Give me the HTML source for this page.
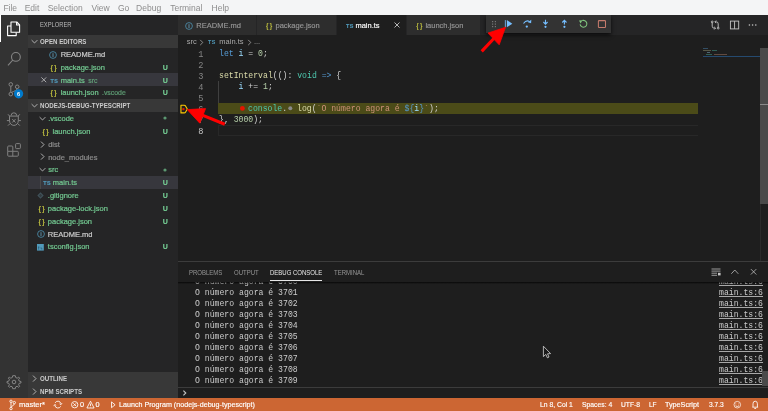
<!DOCTYPE html>
<html><head><meta charset="utf-8">
<style>
*{box-sizing:border-box}
html,body{margin:0;padding:0}
body{width:768px;height:411px;overflow:hidden;position:relative;background:#1e1e1e;font-family:"Liberation Sans",sans-serif;}
.a{position:absolute;white-space:pre}
.mono{font-family:"Liberation Mono",monospace}
#menubar{left:0;top:0;width:768px;height:15px;background:#f4f5f6;z-index:5}
#menubar span{position:absolute;top:0.9px;line-height:15px;font-size:8.5px;color:#8d8d8d}
#activity{left:0;top:15px;width:28px;height:383px;background:#333333}
#sidebar{left:28px;top:15px;width:149.5px;height:383px;background:#252526;overflow:hidden}
.row{position:absolute;left:0;width:149.5px;height:12.83px;line-height:12.83px;font-size:7.5px;color:#73c991;-webkit-text-stroke:0.2px currentColor}
.row span{position:absolute;top:1.1px}
.hdr{position:absolute;left:0;width:149.5px;height:12.83px;line-height:12.83px;background:#383838;color:#cccccc;font-weight:bold;font-size:7px}
.hdr span{transform:scaleX(0.88);transform-origin:0 50%;margin-top:0.6px}
.u{left:134.7px;color:#73c991;font-size:7px;font-weight:bold}
#tabs{left:177.5px;top:15px;width:590.5px;height:20px;background:#252526}
.tab{position:absolute;top:0;height:20px;line-height:20px;background:#2d2d2d;font-size:7.5px;color:#969696;-webkit-text-stroke:0.15px currentColor}
.tab span{position:absolute;top:0.6px}
#editor{left:177.5px;top:35px;width:590.5px;height:226.5px;background:#1e1e1e;overflow:hidden}
.ln{position:absolute;left:0;width:26px;text-align:right;font-size:8.6px;margin-top:1.2px;line-height:11px;color:#858585}
.cl{position:absolute;left:41.2px;font-size:8.8px;line-height:11px;color:#d4d4d4;white-space:pre;transform:scaleX(0.926);transform-origin:0 50%;margin-top:0.7px}
#panel{left:177.5px;top:261.3px;width:590.5px;height:136.7px;background:#1e1e1e;border-top:1px solid #3c3c3c;overflow:hidden}
.pl{position:absolute;left:17px;font-size:8.8px;line-height:11px;color:#cccccc;white-space:pre;transform:scaleX(0.926);transform-origin:0 50%}
.plink{position:absolute;left:541.5px;font-size:8.8px;line-height:11px;color:#cccccc;text-decoration:underline;text-decoration-thickness:0.7px;text-underline-offset:1px;text-decoration-color:#a8a8a8;white-space:pre;transform:scaleX(0.926);transform-origin:0 50%}
#status{left:0;top:398px;width:768px;height:13px;background:#cc6633}
#status span{position:absolute;top:0.2px;line-height:13px;font-size:7.2px;color:#ffffff;-webkit-text-stroke:0.15px currentColor}
</style></head>
<body><div id="root" style="position:absolute;left:0;top:0;width:768px;height:411px;will-change:transform">
<!-- MENUBAR -->
<div id="menubar" class="a">
<span style="left:3.4px">File</span>
<span style="left:24.7px">Edit</span>
<span style="left:47.7px">Selection</span>
<span style="left:91.4px">View</span>
<span style="left:117.9px">Go</span>
<span style="left:136.1px">Debug</span>
<span style="left:170.2px">Terminal</span>
<span style="left:211.6px">Help</span>
</div>

<!-- ACTIVITY BAR -->
<div id="activity" class="a">
<div style="position:absolute;left:0;top:0;width:1.2px;height:27px;background:#ffffff"></div>
<svg class="a" style="left:0;top:0" width="28" height="383" viewBox="0 15 28 383">
 <g fill="none" stroke="#ffffff" stroke-width="1.1" stroke-linejoin="round">
  <path d="M11 26 L7.6 26 L7.6 35.6 L16.2 35.6 L16.2 32.6"/>
  <path d="M11 22 L16.8 22 L19.6 24.8 L19.6 32.2 L11 32.2 Z"/>
  <path d="M16.6 22 L16.6 25 L19.6 25"/>
 </g>
 <g fill="none" stroke="#858585" stroke-width="1.1">
  <circle cx="15.9" cy="56.9" r="4.4"/>
  <path d="M12.8 60 L8 65.3"/>
 </g>
 <g fill="none" stroke="#858585" stroke-width="1">
  <circle cx="10.8" cy="84.4" r="1.8"/>
  <circle cx="10.8" cy="94.1" r="1.8"/>
  <circle cx="17.2" cy="86.8" r="1.8"/>
  <path d="M10.8 86.2 L10.8 92.3 M17.2 88.6 C17.2 90.6 14 91 11.4 92.5"/>
 </g>
 <circle cx="18.6" cy="93.8" r="4.6" fill="#007acc"/>
 <text x="18.6" y="95.8" font-size="5.6" font-weight="bold" fill="#ffffff" text-anchor="middle" font-family="Liberation Sans">6</text>
 <g fill="none" stroke="#858585" stroke-width="1">
  <path d="M11.1 115.6 A2.8 2.8 0 0 1 16.7 115.6"/>
  <path d="M9.5 116.1 L18.3 116.1 L18.3 120.6 C18.3 123.5 16.4 125.4 13.9 125.4 C11.4 125.4 9.5 123.5 9.5 120.6 Z"/>
  <path d="M12.3 119.1 L15.5 122.5 M15.5 119.1 L12.3 122.5"/>
  <path d="M8 114.3 L9.6 116.1 M19.8 114.3 L18.2 116.1 M6.9 120.6 L9.5 120.6 M20.9 120.6 L18.3 120.6 M8 125.6 L10 123.6 M19.8 125.6 L17.8 123.6"/>
 </g>
 <g fill="none" stroke="#858585" stroke-width="0.95">
  <path d="M7.7 151.3 L7.7 146.9 Q7.7 146 8.6 146 L11.9 146 Q12.8 146 12.8 146.9 L12.8 151.3 L17.4 151.3 Q18.3 151.3 18.3 152.2 L18.3 155.3 Q18.3 156.2 17.4 156.2 L8.6 156.2 Q7.7 156.2 7.7 155.3 Z"/>
  <path d="M7.7 151.3 L12.8 151.3 L12.8 156.2"/>
  <rect x="15.6" y="143.6" width="4.8" height="5" rx="0.8"/>
 </g>
 <g fill="none" stroke="#858585" stroke-width="1" transform="translate(0 0.5)">
  <circle cx="14" cy="381.5" r="1.8"/>
  <path d="M14 375.2 L15.3 375.2 L15.7 377 L17.2 377.7 L18.7 376.6 L19.6 377.6 L18.6 379.1 L19.2 380.6 L21 381 L21 382.4 L19.2 382.8 L18.6 384.3 L19.6 385.8 L18.6 386.8 L17.1 385.7 L15.7 386.4 L15.3 388.2 L12.7 388.2 L12.3 386.4 L10.9 385.7 L9.4 386.8 L8.4 385.8 L9.4 384.3 L8.8 382.8 L7 382.4 L7 381 L8.8 380.6 L9.4 379.1 L8.4 377.6 L9.3 376.6 L10.8 377.7 L12.3 377 L12.7 375.2 Z"/>
 </g>
</svg>
</div>

<!-- SIDEBAR -->
<div id="sidebar" class="a">
<div class="a" style="left:12.1px;top:0.2px;line-height:20px;font-size:7.4px;color:#bbbbbb;transform:scaleX(0.78);transform-origin:0 50%">EXPLORER</div>
<div class="hdr" style="top:20.0px"><svg class="a" style="left:3px;top:0px" width="7" height="12.76" viewBox="0 0 7 12.76"><path d="M0.6 5.1 L3.5 8 L6.4 5.1" fill="none" stroke="#c5c5c5" stroke-width="0.85"/></svg><span class="a" style="left:12.1px;top:0">OPEN EDITORS</span></div>
<div class="row" style="top:32.83px;color:#cccccc"><svg class="a" style="left:21.0px;top:2.9px" width="8" height="8" viewBox="0 0 8 8"><circle cx="4" cy="4" r="3.4" fill="none" stroke="#4f94b4" stroke-width="0.8"/><rect x="3.6" y="2.2" width="0.8" height="3.8" fill="#6aa6c4"/></svg><span style="left:32.7px">README.md</span></div>
<div class="row" style="top:45.66px"><span style="left:22.4px;color:#cbcb41;font-size:7.4px;letter-spacing:1.3px">{}</span><span style="left:32.7px">package.json</span><span class="u" style="">U</span></div>
<div class="row" style="top:58.49px;background:#37373d"><svg class="a" style="left:12.6px;top:3.9px" width="6" height="6" viewBox="0 0 6 6"><path d="M0.4 0.4 L5.2 5.2 M5.2 0.4 L0.4 5.2" stroke="#c5c5c5" stroke-width="0.8"/></svg><span style="left:22.5px;color:#519aba;font-weight:bold;font-size:5.4px;letter-spacing:0.4px">TS</span><span style="left:32.7px">main.ts</span><span style="left:60.3px;font-size:6.9px;opacity:0.7">src</span><span class="u" style="">U</span></div>
<div class="row" style="top:71.32px"><span style="left:22.4px;color:#cbcb41;font-size:7.4px;letter-spacing:1.3px">{}</span><span style="left:32.7px">launch.json</span><span style="left:74px;font-size:6.9px;opacity:0.7">.vscode</span><span class="u" style="">U</span></div>
<div class="hdr" style="top:84.15px"><svg class="a" style="left:3px;top:0px" width="7" height="12.76" viewBox="0 0 7 12.76"><path d="M0.6 5.1 L3.5 8 L6.4 5.1" fill="none" stroke="#c5c5c5" stroke-width="0.85"/></svg><span class="a" style="left:12.1px;top:0">NODEJS-DEBUG-TYPESCRIPT</span></div>
<div class="row" style="top:96.98px"><svg class="a" style="left:10.6px;top:0px" width="7" height="12.76" viewBox="0 0 7 12.76"><path d="M0.6 5.1 L3.5 8 L6.4 5.1" fill="none" stroke="#c5c5c5" stroke-width="0.85"/></svg><span style="left:20.2px">.vscode</span><svg class="a" style="left:135.3px;top:4.5px" width="4" height="4"><circle cx="2" cy="2" r="1.6" fill="#73c991" opacity="0.7"/></svg></div>
<div class="row" style="top:109.81px"><span style="left:14.5px;color:#cbcb41;font-size:7.4px;letter-spacing:1.3px">{}</span><span style="left:24.5px">launch.json</span><span class="u" style="">U</span></div>
<div class="row" style="top:122.64px;color:#8c8c8c"><svg class="a" style="left:10.6px;top:0px" width="7" height="12.76" viewBox="0 0 7 12.76"><path d="M2 3.6 L5 6.6 L2 9.6" fill="none" stroke="#c5c5c5" stroke-width="0.85"/></svg><span style="left:20.2px">dist</span></div>
<div class="row" style="top:135.47px;color:#8c8c8c"><svg class="a" style="left:10.6px;top:0px" width="7" height="12.76" viewBox="0 0 7 12.76"><path d="M2 3.6 L5 6.6 L2 9.6" fill="none" stroke="#c5c5c5" stroke-width="0.85"/></svg><span style="left:20.2px">node_modules</span></div>
<div class="row" style="top:148.3px"><svg class="a" style="left:10.6px;top:0px" width="7" height="12.76" viewBox="0 0 7 12.76"><path d="M0.6 5.1 L3.5 8 L6.4 5.1" fill="none" stroke="#c5c5c5" stroke-width="0.85"/></svg><span style="left:20.2px">src</span><svg class="a" style="left:135.3px;top:4.5px" width="4" height="4"><circle cx="2" cy="2" r="1.6" fill="#73c991" opacity="0.7"/></svg></div>
<div class="row" style="top:161.13px;background:#37373d"><div class="a" style="left:11.7px;top:0;width:0.7px;height:12.83px;background:#4a4a4a"></div><span style="left:15.3px;color:#519aba;font-weight:bold;font-size:5.4px;letter-spacing:0.4px">TS</span><span style="left:24.8px">main.ts</span><span class="u" style="">U</span></div>
<div class="row" style="top:173.96px"><svg class="a" style="left:9.3px;top:2.6px" width="7" height="7" viewBox="0 0 7 7"><path d="M3.5 0.3 L6.7 3.5 L3.5 6.7 L0.3 3.5Z" fill="#41535b"/><path d="M3.5 1.8 L5.2 3.5 L3.5 5.2 L1.8 3.5Z" fill="#252526" opacity="0.5"/></svg><span style="left:19.8px">.gitignore</span><span class="u" style="">U</span></div>
<div class="row" style="top:186.79px"><span style="left:10.4px;color:#cbcb41;font-size:7.4px;letter-spacing:1.3px">{}</span><span style="left:19.8px">package-lock.json</span><span class="u" style="">U</span></div>
<div class="row" style="top:199.62px"><span style="left:10.4px;color:#cbcb41;font-size:7.4px;letter-spacing:1.3px">{}</span><span style="left:19.8px">package.json</span><span class="u" style="">U</span></div>
<div class="row" style="top:212.45px;color:#cccccc"><svg class="a" style="left:9.0px;top:2.9px" width="8" height="8" viewBox="0 0 8 8"><circle cx="4" cy="4" r="3.4" fill="none" stroke="#4f94b4" stroke-width="0.8"/><rect x="3.6" y="2.2" width="0.8" height="3.8" fill="#6aa6c4"/></svg><span style="left:19.8px">README.md</span></div>
<div class="row" style="top:225.28px"><svg class="a" style="left:9px;top:3.6px" width="7" height="7" viewBox="0 0 7 7"><rect x="0" y="0" width="6.8" height="6.6" fill="#519aba"/><path d="M1.6 2.6 L1.6 5.6 M1 3.2 L2.4 3.2 M3.4 4 L4.8 4 L4.8 5.6" stroke="#2b5a75" stroke-width="0.7" fill="none"/></svg><span style="left:19.8px">tsconfig.json</span><span class="u" style="">U</span></div>
<div class="a" style="left:0;top:357.2px;width:149.5px;height:0.8px;background:#3a3a3a"></div>
<div class="hdr" style="top:357.2px"><svg class="a" style="left:3px;top:0px" width="7" height="12.76" viewBox="0 0 7 12.76"><path d="M2 3.6 L5 6.6 L2 9.6" fill="none" stroke="#c5c5c5" stroke-width="0.85"/></svg><span class="a" style="left:12.1px;top:0">OUTLINE</span></div>
<div class="hdr" style="top:369.96px"><svg class="a" style="left:3px;top:0px" width="7" height="12.76" viewBox="0 0 7 12.76"><path d="M2 3.6 L5 6.6 L2 9.6" fill="none" stroke="#c5c5c5" stroke-width="0.85"/></svg><span class="a" style="left:12.1px;top:0">NPM SCRIPTS</span></div>
</div>

<!-- TABS -->
<div id="tabs" class="a">
<div class="tab" style="left:0;width:78.6px"><svg class="a" style="left:7.1px;top:6.5px" width="8" height="8" viewBox="0 0 8 8"><circle cx="4" cy="4" r="3.4" fill="none" stroke="#4f94b4" stroke-width="0.8"/><rect x="3.6" y="2.2" width="0.8" height="3.8" fill="#6aa6c4"/></svg><span style="left:18.8px">README.md</span></div>
<div class="tab" style="left:79.6px;width:79.4px"><span style="left:8.8px;color:#cbcb41;font-size:7.4px;letter-spacing:1.3px">{}</span><span style="left:18.4px">package.json</span></div>
<div class="tab" style="left:159.8px;width:68.7px;background:#1e1e1e;color:#ffffff"><span style="left:8.7px;color:#519aba;font-weight:bold;font-size:5.4px;letter-spacing:0.4px">TS</span><span style="left:18.1px">main.ts</span><svg class="a" style="left:56.9px;top:7.1px" width="6" height="6" viewBox="0 0 6 6"><path d="M0.5 0.5 L5.5 5.5 M5.5 0.5 L0.5 5.5" stroke="#c5c5c5" stroke-width="0.9"/></svg></div>
<div class="tab" style="left:229.5px;width:73px"><span style="left:9.3px;color:#cbcb41;font-size:7.4px;letter-spacing:1.3px">{}</span><span style="left:18.4px">launch.json</span></div>
<svg class="a" style="left:531px;top:0" width="60" height="20" viewBox="709 15 60 20">
 <g fill="none" stroke="#c5c5c5" stroke-width="0.9">
  <path d="M712.2 22.5 L712.2 26.2 Q712.2 28.2 714.2 28.2 L715.5 28.2 M714.2 26.9 L715.5 28.2 L714.2 29.5"/>
  <path d="M718.2 27.5 L718.2 23.8 Q718.2 21.8 716.2 21.8 L714.9 21.8 M716.2 20.5 L714.9 21.8 L716.2 23.1"/>
  <circle cx="712.2" cy="21.9" r="0.9"/><circle cx="718.2" cy="28.1" r="0.9"/>
  <rect x="730.4" y="21.1" width="8.3" height="7.8"/>
  <path d="M734.55 21.1 L734.55 28.9"/>
 </g>
 <g fill="#c5c5c5"><circle cx="749.4" cy="25" r="0.8"/><circle cx="752.6" cy="25" r="0.8"/><circle cx="755.8" cy="25" r="0.8"/></g>
</svg>
</div>

<!-- EDITOR -->
<div id="editor" class="a">
<div class="a mono" style="left:9.3px;top:0;line-height:13.5px;font-size:7.5px;color:#a9a9a9;font-family:'Liberation Sans'"></div>
<div class="a" style="left:9.3px;top:0;height:13px;line-height:13.5px;font-size:7.5px;color:#a9a9a9">src</div>
<svg class="a" style="left:21.5px;top:3.5px" width="5" height="7" viewBox="0 0 5 7"><path d="M1.2 0.9 L3.8 3.5 L1.2 6.1" fill="none" stroke="#a9a9a9" stroke-width="0.8"/></svg>
<div class="a" style="left:30.6px;top:0.8px;line-height:13.5px;font-size:5.4px;letter-spacing:0.4px;color:#519aba;font-weight:bold">TS</div>
<div class="a" style="left:41.8px;top:0;line-height:13.5px;font-size:7.5px;color:#a9a9a9">main.ts</div>
<svg class="a" style="left:69px;top:3.5px" width="5" height="7" viewBox="0 0 5 7"><path d="M1.2 0.9 L3.8 3.5 L1.2 6.1" fill="none" stroke="#a9a9a9" stroke-width="0.8"/></svg>
<div class="a" style="left:76.4px;top:0;line-height:13.5px;font-size:7.5px;color:#a9a9a9">...</div>
<div class="a" style="left:40.7px;top:68.1px;width:480px;height:11px;background:#4b4b18"></div>
<div class="a" style="left:40.7px;top:90.1px;width:480px;height:11px;border-top:1px solid #282828;border-bottom:1px solid #282828;border-left:1px solid #282828"></div>
<div class="a" style="left:40.5px;top:46px;width:0.7px;height:22px;background:#404040"></div>
<div class="ln mono" style="top:13.5px">1</div>
<div class="ln mono" style="top:24.5px">2</div>
<div class="ln mono" style="top:35.5px">3</div>
<div class="ln mono" style="top:46.5px">4</div>
<div class="ln mono" style="top:57.5px">5</div>
<div class="ln mono" style="top:68.5px">6</div>
<div class="ln mono" style="top:79.5px">7</div>
<div class="ln mono" style="top:90.5px;color:#c6c6c6">8</div>
<div class="cl mono" style="top:13px"><span style="color:#569cd6">let</span> <span style="color:#9cdcfe">i</span> = <span style="color:#b5cea8">0</span>;</div>
<div class="cl mono" style="top:35px"><span style="color:#dcdcaa">setInterval</span>((): <span style="color:#4ec9b0">void</span> <span style="color:#569cd6">=&gt;</span> {</div>
<div class="cl mono" style="top:46px">    <span style="color:#9cdcfe">i</span> += <span style="color:#b5cea8">1</span>;</div>
<div class="cl mono" style="top:79px">}, <span style="color:#b5cea8">3000</span>);</div>
<div class="cl mono" style="top:68px;left:70.4px"><span style="color:#4ec9b0">console</span>.</div>
<div class="cl mono" style="top:68px;left:119.6px"><span style="color:#dcdcaa">log</span>(<span style="color:#ce9178">`O número agora é </span><span style="color:#569cd6">${</span><span style="color:#9cdcfe">i</span><span style="color:#569cd6">}</span><span style="color:#ce9178">`</span>);</div>
<svg class="a" style="left:61px;top:70px" width="7" height="7"><circle cx="3.4" cy="3.4" r="2.4" fill="#e51400"/></svg>
<svg class="a" style="left:109.4px;top:70.3px" width="7" height="7"><circle cx="3.3" cy="3.3" r="2" fill="#8a8a8a"/></svg>
<svg class="a" style="left:0;top:68px" width="14" height="12" viewBox="0 0 14 12"><path d="M2.95 2.3 L6.2 2.3 Q7 2.3 7.5 2.9 L9.3 6.1 L7.5 9.3 Q7 9.9 6.2 9.9 L2.95 9.9 Z" fill="#1e1e1e" stroke="#ffcc00" stroke-width="1.1" stroke-linejoin="round"/><circle cx="5.4" cy="6.1" r="1.2" fill="#e51400"/></svg>
<div class="a" style="left:0;top:0;opacity:0.38">
<div class="a" style="left:525.8px;top:12.8px;width:5px;height:0.9px;background:#569cd6"></div>
<div class="a" style="left:525.8px;top:15px;width:8px;height:0.9px;background:#b8b88a"></div>
<div class="a" style="left:534.5px;top:15px;width:5px;height:0.9px;background:#4ec9b0"></div>
<div class="a" style="left:529.5px;top:17px;width:2.5px;height:0.9px;background:#9cdcfe"></div>
<div class="a" style="left:528.5px;top:19px;width:6px;height:0.9px;background:#4ec9b0"></div>
<div class="a" style="left:536.5px;top:19px;width:13px;height:0.9px;background:#ce9178"></div>
</div>
<div class="a" style="left:525.3px;top:21px;width:57px;height:0.9px;background:#264f78;opacity:0.9"></div>
<div class="a" style="left:582.5px;top:13px;width:8px;height:156px;background:#4a4a4a"></div>
<div class="a" style="left:582.5px;top:169px;width:0.6px;height:58px;background:#2a2a2a"></div>
<div class="a" style="left:582.5px;top:69px;width:8px;height:1.3px;background:#8a8a8a"></div>
</div>

<!-- PANEL -->
<div id="panel" class="a">
<div class="a" style="left:11.5px;top:0.3px;line-height:19px;font-size:7.2px;color:#969696;transform:scaleX(0.835);transform-origin:0 50%">PROBLEMS</div>
<div class="a" style="left:56.30000000000001px;top:0.3px;line-height:19px;font-size:7.2px;color:#969696;transform:scaleX(0.835);transform-origin:0 50%">OUTPUT</div>
<div class="a" style="left:92.80000000000001px;top:0.3px;line-height:19px;font-size:7.2px;color:#e7e7e7;transform:scaleX(0.835);transform-origin:0 50%">DEBUG CONSOLE</div>
<div class="a" style="left:156.0px;top:0.3px;line-height:19px;font-size:7.2px;color:#969696;transform:scaleX(0.835);transform-origin:0 50%">TERMINAL</div>
<div class="a" style="left:92.80000000000001px;top:17.6px;width:51.5px;height:0.8px;background:#e7e7e7"></div>
<svg class="a" style="left:0;top:0" width="590" height="137" viewBox="177.5 262.5 590 137">
 <g fill="none" stroke="#c5c5c5" stroke-width="0.75">
  <path d="M711 269.5 L720 269.5 M711 271.6 L720 271.6 M711 273.7 L716.5 273.7 M711 275.8 L716.5 275.8"/>
  <path d="M730.8 274.3 L734.3 270.5 L737.8 274.3"/>
  <path d="M750.4 269.6 L755.8 275 M755.8 269.6 L750.4 275"/>
 </g>
 <rect x="717.5" y="273.3" width="2.6" height="2.6" fill="#c5c5c5"/>
</svg>
<div class="a" style="left:0;top:19.5px;width:590px;height:105px;overflow:hidden">
<div class="pl mono" style="top:-4.4px">O número agora é 3700</div>
<div class="plink mono" style="top:-4.4px">main.ts:6</div>
<div class="pl mono" style="top:6.6px">O número agora é 3701</div>
<div class="plink mono" style="top:6.6px">main.ts:6</div>
<div class="pl mono" style="top:17.6px">O número agora é 3702</div>
<div class="plink mono" style="top:17.6px">main.ts:6</div>
<div class="pl mono" style="top:28.6px">O número agora é 3703</div>
<div class="plink mono" style="top:28.6px">main.ts:6</div>
<div class="pl mono" style="top:39.6px">O número agora é 3704</div>
<div class="plink mono" style="top:39.6px">main.ts:6</div>
<div class="pl mono" style="top:50.6px">O número agora é 3705</div>
<div class="plink mono" style="top:50.6px">main.ts:6</div>
<div class="pl mono" style="top:61.6px">O número agora é 3706</div>
<div class="plink mono" style="top:61.6px">main.ts:6</div>
<div class="pl mono" style="top:72.6px">O número agora é 3707</div>
<div class="plink mono" style="top:72.6px">main.ts:6</div>
<div class="pl mono" style="top:83.6px">O número agora é 3708</div>
<div class="plink mono" style="top:83.6px">main.ts:6</div>
<div class="pl mono" style="top:94.6px">O número agora é 3709</div>
<div class="plink mono" style="top:94.6px">main.ts:6</div>
</div>
<div class="a" style="left:0;top:19.3px;width:590px;height:2.5px;background:linear-gradient(rgba(0,0,0,0.75),rgba(0,0,0,0))"></div>
<div class="a" style="left:584.7px;top:109px;width:5.8px;height:15px;background:#4a4a4a"></div>
<div class="a" style="left:0;top:124.8px;width:590px;height:0.8px;background:#3c3c3c"></div>
<svg class="a" style="left:4.5px;top:127px" width="6" height="8" viewBox="0 0 6 8"><path d="M1.4 1.6 L3.8 4 L1.4 6.4" fill="none" stroke="#c5c5c5" stroke-width="1.1"/></svg>
</div>

<!-- STATUS -->
<div id="status" class="a">
<svg class="a" style="left:0;top:0" width="768" height="13" viewBox="0 398 768 13">
 <g fill="none" stroke="#ffffff" stroke-width="0.85">
  <circle cx="11" cy="401.3" r="1.2"/><circle cx="11" cy="408.6" r="1.2"/><circle cx="14.3" cy="402.6" r="1.2"/>
  <path d="M11 402.5 L11 407.4 M14.3 403.8 C14.3 405.8 11.5 405.5 11.2 407.3"/>
  <path d="M55.1 402.9 A3.1 3.1 0 0 1 60.9 403.6 M60.7 406.3 A3.1 3.1 0 0 1 54.9 405.6"/>
  <path d="M59.6 403.9 L61.1 404.6 L62 403.1 M56.2 405.3 L54.7 404.6 L53.8 406.1"/>
  <circle cx="74.7" cy="404.7" r="3.2"/>
  <path d="M73.3 403.3 L76.1 406.1 M76.1 403.3 L73.3 406.1"/>
  <path d="M90.5 401.2 L94.1 408 L86.9 408 Z" stroke-linejoin="round"/>
  <path d="M90.5 403.6 L90.5 406 M90.5 406.8 L90.5 407.3"/>
  <path d="M111.5 401.9 L115.1 404.8 L111.5 407.7 Z" stroke-linejoin="round"/>
  <circle cx="737.3" cy="404.7" r="3.3" stroke-width="0.7"/>
  <path d="M735.8 403.6 L735.8 404.3 M738.8 403.6 L738.8 404.3 M735.6 405.8 Q737.3 407.3 739 405.8"/>
  <path d="M752.3 407.2 L758.1 407.2 M753 407 L753 403.8 Q753 401.2 755.2 401.2 Q757.4 401.2 757.4 403.8 L757.4 407 M754.3 408.5 L756.1 408.5"/>
 </g>
</svg>
<span style="left:18.5px;font-size:7.3px;transform:scaleX(1.03);transform-origin:0 50%">master*</span>
<span style="left:80.1px;font-size:7.3px">0</span>
<span style="left:95.6px;font-size:7.3px">0</span>
<span style="left:119.3px;font-size:7.3px;transform:scaleX(0.98);transform-origin:0 50%">Launch Program (nodejs-debug-typescript)</span>
<span style="left:540.4px;font-size:7.3px;transform:scaleX(0.93);transform-origin:0 50%">Ln 8, Col 1</span>
<span style="left:582.2px;font-size:7.3px;transform:scaleX(0.93);transform-origin:0 50%">Spaces: 4</span>
<span style="left:620.5px;font-size:7.3px;transform:scaleX(0.92);transform-origin:0 50%">UTF-8</span>
<span style="left:648.7px;font-size:7.3px;transform:scaleX(0.89);transform-origin:0 50%">LF</span>
<span style="left:665.4px;font-size:7.3px;transform:scaleX(0.985);transform-origin:0 50%">TypeScript</span>
<span style="left:709.2px;font-size:7.3px;transform:scaleX(0.91);transform-origin:0 50%">3.7.3</span>
</div>

<!-- DEBUG TOOLBAR -->
<div class="a" style="left:486px;top:15px;width:125px;height:18px;background:#333333;box-shadow:0 1.5px 4px rgba(0,0,0,0.75)"></div>
<svg class="a" style="left:0;top:0" width="768" height="411" viewBox="0 0 768 411">
 <g fill="#777777"><rect x="492" y="21" width="1.2" height="1.2"/><rect x="494.8" y="21" width="1.2" height="1.2"/><rect x="492" y="23.5" width="1.2" height="1.2"/><rect x="494.8" y="23.5" width="1.2" height="1.2"/><rect x="492" y="26" width="1.2" height="1.2"/><rect x="494.8" y="26" width="1.2" height="1.2"/></g>
 <rect x="504.85" y="20.1" width="1" height="7.1" fill="#75beff" opacity="0.85"/>
 <path d="M506.9 20.1 L512.3 23.7 L506.9 27.3 Z" fill="#75beff"/>
 <g fill="none" stroke="#75beff" stroke-width="1.1">
  <path d="M523.5 23.5 Q526.3 19.6 529.6 21.6"/>
  <path d="M545.5 19.8 L545.5 24 M543.4 22 L545.5 24.1 L547.6 22"/>
  <path d="M564.4 24.6 L564.4 20.4 M562.3 22.5 L564.4 20.4 L566.5 22.5"/>
 </g>
 <path d="M531.3 19.8 L531.1 23.3 L527.9 22.2 Z" fill="#75beff"/>
 <circle cx="526.8" cy="26.6" r="1.15" fill="#75beff"/>
 <circle cx="545.5" cy="26.8" r="1.1" fill="#75beff"/>
 <circle cx="564.4" cy="26.8" r="1.1" fill="#75beff"/>
 <g fill="none" stroke="#80c47e" stroke-width="1.05">
  <path d="M582.2 20.6 A3.4 3.4 0 1 1 580.1 24.4"/>
 </g>
 <path d="M579 20.6 L582.4 20.2 L580.6 23.4 Z" fill="#80c47e"/>
 <rect x="598.4" y="20.6" width="7.1" height="6.8" rx="0.7" fill="none" stroke="#c57b6d" stroke-width="1.05"/>
 <!-- red arrows -->
 <g fill="#ff0000" stroke="#ff0000" stroke-linejoin="round">
  <path d="M505.5 27.3 L488 33.1 L499.2 44.8 Z" stroke-width="0.8"/>
  <path d="M481.7 51.4 L494.5 37.8" stroke-width="3.1" stroke-linecap="butt" fill="none"/>
  <path d="M187.2 109.6 L205.6 108.6 L199.8 123.2 Z" stroke-width="0.8"/>
  <path d="M224.8 124.3 L201 114.6" stroke-width="3.1" stroke-linecap="butt" fill="none"/>
 </g>
 <!-- mouse cursor -->
 <path d="M543.4 346.2 L543.4 356.6 L545.8 354.4 L547.4 357.8 L549 357 L547.5 353.8 L550.6 353.6 Z" fill="#1a1a1a" stroke="#d8d8d8" stroke-width="0.8" stroke-linejoin="round"/>
</svg>
</div></body></html>
